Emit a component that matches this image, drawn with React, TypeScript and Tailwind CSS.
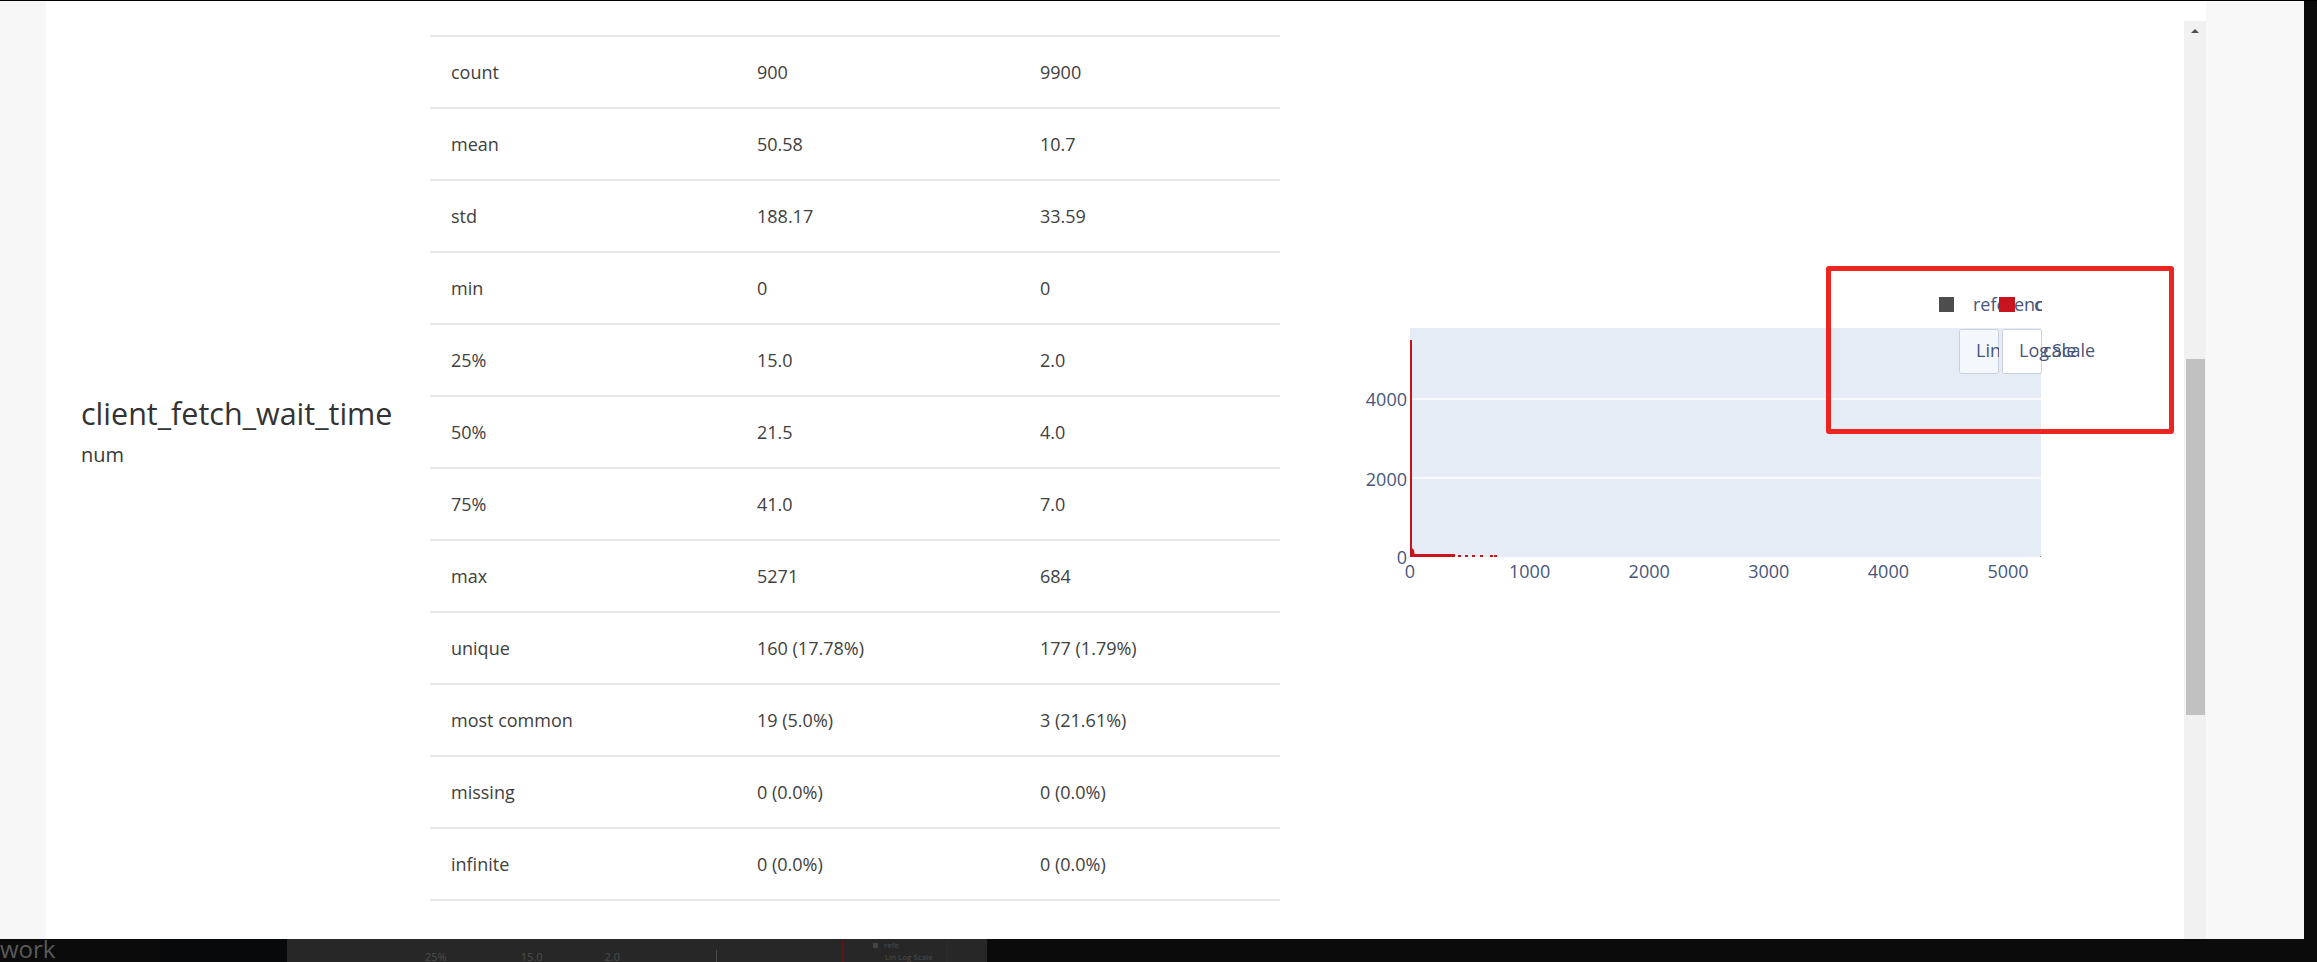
import React from 'react';

const rows: [string, string, string][] = [
  ['count', '900', '9900'],
  ['mean', '50.58', '10.7'],
  ['std', '188.17', '33.59'],
  ['min', '0', '0'],
  ['25%', '15.0', '2.0'],
  ['50%', '21.5', '4.0'],
  ['75%', '41.0', '7.0'],
  ['max', '5271', '684'],
  ['unique', '160 (17.78%)', '177 (1.79%)'],
  ['most common', '19 (5.0%)', '3 (21.61%)'],
  ['missing', '0 (0.0%)', '0 (0.0%)'],
  ['infinite', '0 (0.0%)', '0 (0.0%)'],
];

const RED = '#c8141e';
const TICK = '#46567a';

// plot area in chart-local coords
const PX = 130;
const PW = 631;
const PY = 327;
const PH = 229;

function Chart() {
  const xTicks = [0, 1000, 2000, 3000, 4000, 5000];
  const dashes = [178, 185, 192, 200, 210, 214];
  return (
    <svg width={904} height={938} className="block" fontFamily="'Open Sans', sans-serif">
      <defs>
        <clipPath id="legendClip">
          <rect x={600} y={280} width={162} height={40} />
        </clipPath>
        <clipPath id="linClip">
          <rect x={679} y={328} width={40} height={46} />
        </clipPath>
      </defs>

      <rect x={PX} y={PY} width={PW} height={PH} fill="#e5ecf6" />
      <line x1={PX} x2={PX + PW} y1={398} y2={398} stroke="#fff" strokeWidth={1.5} />
      <line x1={PX} x2={PX + PW} y1={477} y2={477} stroke="#fff" strokeWidth={1.5} />

      {/* y ticks */}
      <text x={127} y={405} textAnchor="end" fontSize={18} fill={TICK}>4000</text>
      <text x={127} y={485} textAnchor="end" fontSize={18} fill={TICK}>2000</text>
      <text x={127} y={563} textAnchor="end" fontSize={18} fill={TICK}>0</text>

      {/* x ticks */}
      {xTicks.map((v, i) => (
        <text key={v} x={PX + i * 119.6} y={577} textAnchor="middle" fontSize={18} fill={TICK}>
          {v}
        </text>
      ))}

      {/* histogram, squashed against the y axis */}
      <rect x={130} y={339} width={2} height={217} fill={RED} />
      <polygon points="131,556 132,547 134,549 135,556" fill={RED} />
      <rect x={130} y={553} width={45} height={3} fill={RED} />
      {dashes.map((d) => (
        <rect key={d} x={d} y={554} width={3} height={2} fill={RED} />
      ))}
      <rect x={760} y={555} width={1} height={1} fill="#888" />

      {/* legend */}
      <rect x={659} y={296} width={15} height={15} fill="#4d4d4d" />
      <g clipPath="url(#legendClip)">
        <text x={693} y={310} fontSize={18} fill={TICK}>reference</text>
        <rect x={719} y={296} width={16} height={15} fill={RED} />
        <text x={754} y={310} fontSize={18} fill={TICK}>current</text>
      </g>

      {/* scale buttons */}
      <rect x={679.5} y={328.5} width={39} height={44} rx={2} fill="#f4f7fb" stroke="#c8d1de" />
      <rect x={722.5} y={328.5} width={39} height={44} rx={2} fill="#fff" stroke="#c8d1de" />
      <g clipPath="url(#linClip)">
        <text x={696} y={356} fontSize={18} fill={TICK}>Linear Scale</text>
      </g>
      <text x={739} y={356} fontSize={18} fill={TICK}>Log</text>
      <text x={763} y={356} fontSize={18} fill={TICK}>cale</text>
      <text x={772} y={356} fontSize={18} fill={TICK}>Scale</text>
    </svg>
  );
}

function StatsTable() {
  return (
    <div className="border-t-2 border-[#e8e8e8]">
      {rows.map(([label, ref, cur]) => (
        <div
          key={label}
          className="grid grid-cols-[306px_283px_1fr] items-center h-[72px] border-b-2 border-[#e8e8e8] pl-[21px] text-[18px] text-[#404040]"
        >
          <span>{label}</span>
          <span>{ref}</span>
          <span>{cur}</span>
        </div>
      ))}
    </div>
  );
}

function Scrollbar() {
  return (
    <div className="w-[22px] flex flex-col">
      <div className="h-[20px] bg-white" />
      <div className="flex-1 bg-[#f1f1f1] flex flex-col">
        <div className="h-[20px] flex items-center justify-center">
          <div className="w-0 h-0 border-l-[4px] border-r-[4px] border-b-[4px] border-l-transparent border-r-transparent border-b-[#505050]" />
        </div>
        <div className="mt-[318px] h-[356px] ml-[2px] mr-[1px] bg-[#c1c1c1]" />
      </div>
    </div>
  );
}

function Taskbar() {
  return (
    <div className="flex h-[23px] overflow-hidden font-['Open_Sans',sans-serif]">
      <div className="w-[160px] bg-[#0b0b0b] flex flex-col overflow-hidden">
        <span className="text-[24px] leading-none -mt-[2px] text-[#5a5a5a]">work</span>
        <span className="text-[14px] leading-none text-[#5a5a5a] tracking-[6px]">O.......l</span>
      </div>
      <div className="w-[127px] bg-[#08090b]" />
      <div className="w-[700px] bg-[#272727] flex text-[11px] text-[#4c4c4c]">
        <span className="ml-[138px] mt-[10px]">25%</span>
        <span className="ml-[74px] mt-[10px]">15.0</span>
        <span className="ml-[62px] mt-[10px]">2.0</span>
        <div className="ml-[96px] mt-[11px] w-px bg-[#4a4a4a]" />
        <div className="ml-[125px] w-px bg-[#5a1818]" />
        <div className="ml-[30px] flex flex-col gap-[4px] pt-[2px]">
          <div className="flex items-center gap-[6px] text-[8px] leading-none">
            <span className="w-[5px] h-[5px] bg-[#444]" />
            <span>refe</span>
          </div>
          <span className="ml-[12px] text-[8px] leading-none">Lin Log Scale</span>
        </div>
        <div className="ml-[14px] w-px bg-[#5a1818]" />
      </div>
      <div className="flex-1 bg-[#0b0b0b]" />
    </div>
  );
}

export default function App() {
  return (
    <div className="w-[2317px] h-[962px] bg-[#0b0b0b] flex flex-col overflow-hidden font-['Open_Sans',sans-serif]">
      <div className="h-px bg-black" />
      <div className="flex h-[938px]">
        <div className="w-[46px] bg-[#f7f7f7]" />
        <div className="flex-1 bg-white flex min-w-0">
          <div className="w-[384px] pl-[35px] pt-[394px] text-[#333]">
            <div className="text-[30.5px] leading-[36px]">client_fetch_wait_time</div>
            <div className="text-[20px] leading-[24px] mt-[12px] text-[#3a3a3a]">num</div>
          </div>
          <div className="w-[850px] pt-[34px]">
            <StatsTable />
          </div>
          <div className="relative flex-1">
            <Chart />
            <div className="absolute left-[546px] top-[265px] w-[348px] h-[168px] border-[5px] border-[#ec2520] rounded-[3px]" />
          </div>
        </div>
        <Scrollbar />
        <div className="w-[98px] bg-[#f8f8f8]" />
        <div className="w-[13px] bg-[#0b0b0b]" />
      </div>
      <Taskbar />
    </div>
  );
}
